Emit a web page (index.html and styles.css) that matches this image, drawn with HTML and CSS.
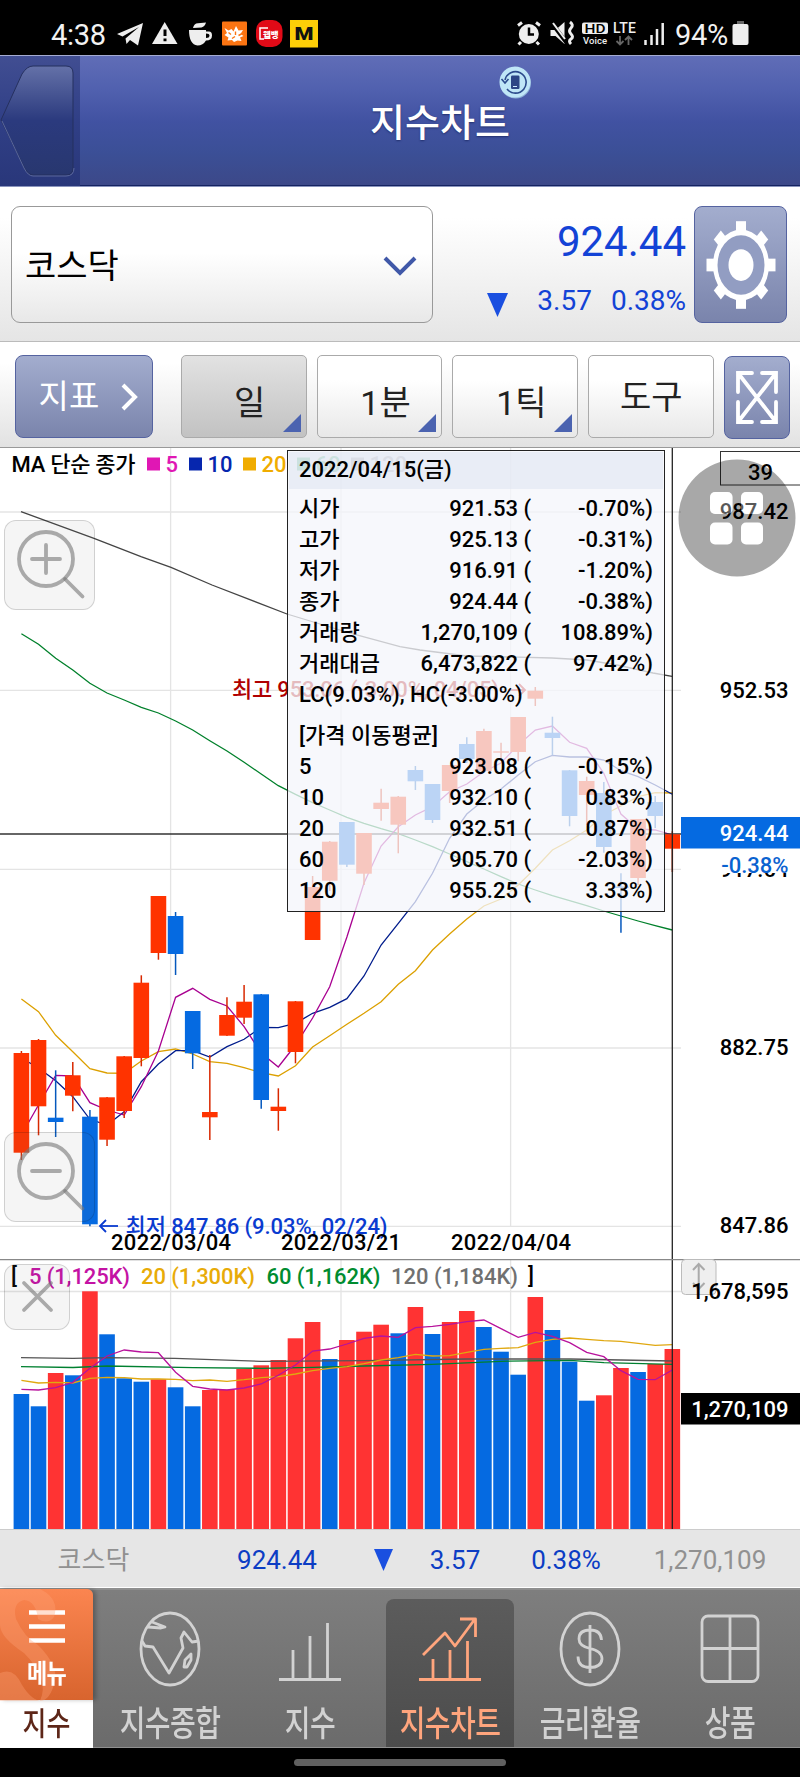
FILE: index.html
```html
<!DOCTYPE html>
<html lang="ko">
  <head>
    <meta charset="UTF-8" />
    <meta name="viewport" content="width=device-width, initial-scale=1.0" />
    <title>지수차트</title>
    <link rel="stylesheet" href="styles.css">
  </head>
  <body>
    <div class="statusbar">
      <div class="status-left">
        <span class="clock">4:38</span>
        <svg class="status-icons" width="204" height="30" viewBox="115 19 204 30">
          <path d="M117 34 143 23 138 45.500 130 40 126.500 44 125.500 38.500 139 27 122.500 36.500Z" fill="#eee" />
          <path d="M164.700 22 177.500 44H152Z" fill="#eee" />
          <path d="M163.500 29.500h3v6.500h-3zM163.500 38.500h3v2.800h-3z" fill="#000" />
          <path d="M189 30h17v1.500h3q3 0 3 4 0 5-6 5-3 5-8.500 5-8.500-1-8.500-15.500zM206 33.500v4.500q3.500 0 3.500-2.500 0-2-3.500-2zM193 28q1-4.500 5-4.700l8-.8q-1 4-4.500 5z" fill="#eee" fill-rule="evenodd" />
          <rect x="222" y="21.500" width="25" height="24" rx="1" fill="#fb7412" />
          <path d="M224.500 28l4 2.500 3-1.500 2 2.500 2.500-5.500 2.500 4.500 4.500-.5-2.500 4 3 2-3.500 1.500 1.500 3.500-4-.5-3.500 1.500-2-2-4.500.5 1-3-4-2.500 2.500-2z" fill="#fff" />
          <path d="M228.500 32.500l2.500 2M235.500 31.500v3.500M238.500 35.500l3-1.500M232 38.500l3-2" stroke="#fb7412" stroke-width="1.400" />
          <rect x="256" y="20" width="26.500" height="27" rx="10" fill="#e10a17" />
          <path d="M268 28h-8v11h4" fill="none" stroke="#fff" stroke-width="1.500" />
          <text x="263" y="38" class="bank-text">웰뱅</text>
          <rect x="290" y="20" width="28" height="27.500" fill="#fdce08" />
          <text x="294.500" y="39.500" class="m-text" textLength="19" lengthAdjust="spacingAndGlyphs">M</text>
        </svg>
      </div>
      <div class="status-right">
        <svg class="status-icons" width="151" height="30" viewBox="516 19 151 30">
          <circle cx="529.800" cy="34" r="10" fill="#eee" />
          <path d="M519 25.500l4-3M537 22.500l4 3M522 42l-2.500 2.500M537.500 42l2.500 2.500" stroke="#eee" stroke-width="3" />
          <path d="M530 27.500v7h5" fill="none" stroke="#000" stroke-width="2.500" />
          <path d="M551.500 30h5l9-8v22l-9-8h-5z" fill="#eee" />
          <path d="M552 22l15 20" stroke="#000" stroke-width="4" />
          <path d="M554 23l12 16" stroke="#eee" stroke-width="2" />
          <path d="M571 22q4 3 1 6t0 6 0 5 0 5" fill="none" stroke="#eee" stroke-width="3" />
          <rect x="583" y="22.500" width="26" height="11.500" rx="2" fill="#eee" />
          <text x="585.500" y="32.500" class="hd" textLength="21" lengthAdjust="spacingAndGlyphs">HD</text>
          <text x="584" y="43.500" class="voice" textLength="24">Voice</text>
          <text x="614" y="32.500" class="lte" textLength="23">LTE</text>
          <path d="M621 36v8M617.500 41l3.500 3.500 3.500-3.500M629.500 45v-8M626 40l3.500-3.500 3.500 3.500" fill="none" stroke="#666" stroke-width="1.800" />
          <path d="M646.500 40v5M652.500 35v10M658 29v16M663.700 23v22" stroke="#eee" stroke-width="2.500" />
        </svg>
        <span class="battery-text">94%</span>
        <svg width="17" height="26" viewBox="0 0 17 26">
          <rect x="5" y="2" width="7" height="4" fill="#666" />
          <rect x=".5" y="5" width="16" height="21" rx="2" fill="#eee" />
        </svg>
      </div>
    </div>

    <div class="header">
      <div class="back">
        <svg width="80" height="130" viewBox="0 1 80 130">
          <defs>
            <linearGradient id="backFill" x1="0" y1="0" x2="0" y2="1">
              <stop offset="0" stop-color="#6471a8" />
              <stop offset=".5" stop-color="#2b3a7e" />
              <stop offset="1" stop-color="#28376f" />
            </linearGradient>
          </defs>
          <path d="M1 65 22 19Q27 11 33 11H66Q73 11 73 18V113Q73 120 66 120H33Q28 120 25 114Z" fill="url(#backFill)" stroke="#25305f" />
          <path d="M2 66 24 113Q28 121 33 121H66Q74 121 74 113" fill="none" stroke="#5a679b" />
        </svg>
      </div>
      <div class="header-title">
        <h1>지수차트</h1>
        <svg class="rotate-badge" width="33" height="33" viewBox="0 0 33 33">
          <circle cx="16.500" cy="17" r="15.500" fill="#8fb2d8" />
          <circle cx="16" cy="16" r="15.500" fill="#bfe6f7" />
          <path d="M6 14A10.700 10.700 0 1 1 8 23" fill="none" stroke="#2b4a8c" stroke-width="1.600" />
          <path d="M2.500 13l3.500 4 3.500-4" fill="none" stroke="#2b4a8c" stroke-width="1.600" />
          <rect x="12" y="9.500" width="8.500" height="13.500" rx="1.200" fill="#2c4686" />
          <path d="M14 20.500h4" stroke="#cfeaff" />
        </svg>
      </div>
    </div>

    <div class="quote">
      <div class="select">
        <span>코스닥</span>
        <svg width="34" height="22" viewBox="0 0 34 22">
          <path d="M2 3 17 18 32 3" fill="none" stroke="#4058a8" stroke-width="4" />
        </svg>
      </div>
      <div class="price">
        <div class="price-now">924.44</div>
        <div class="price-diff">
          <svg width="21" height="24" viewBox="0 0 21 24"><path d="M0 0h21L10.500 24z" fill="#1a4fe0" /></svg>
          <span class="diff">3.57</span>
          <span>0.38%</span>
        </div>
      </div>
      <div class="settings">
        <svg width="70" height="90" viewBox="0 0 70 90">
          <g transform="translate(35 45) scale(1 1.270)" fill="#fff">
            <rect x="-5" y="-34.500" width="10" height="69" />
            <rect x="-34.500" y="-5" width="69" height="10" />
            <rect x="-5" y="-33.500" width="10" height="67" transform="rotate(45)" />
            <rect x="-5" y="-33.500" width="10" height="67" transform="rotate(-45)" />
            <circle r="28" />
            <circle r="23.500" fill="#929dc2" />
            <circle r="12.500" />
          </g>
        </svg>
      </div>
    </div>

    <div class="toolbar">
      <div class="btn btn-blue btn-indicator">
        <span>지표</span>
        <svg width="18" height="28" viewBox="0 0 18 28"><path d="M3 2 15 14 3 26" fill="none" stroke="#fff" stroke-width="4" /></svg>
      </div>
      <div class="btn btn-period selected">일</div>
      <div class="btn btn-period">1분</div>
      <div class="btn btn-period">1틱</div>
      <div class="btn btn-tool">도구</div>
      <div class="btn btn-blue btn-full">
        <svg width="42" height="54" viewBox="0 0 42 54" fill="none" stroke="#fff" stroke-width="3.800" stroke-linecap="round">
          <path d="M2 21V2H16M26 2H40V21M2 31V51H16M26 51H40V31M2 2 40 51M40 2 2 51" />
        </svg>
      </div>
    </div>

    <div class="chart">
      <svg id="price-chart" class="price-chart" width="800" height="811" viewBox="0 448 800 811"></svg>
      <svg id="volume-chart" class="volume-chart" width="800" height="270" viewBox="0 1259 800 270"></svg>

      <div class="tooltip">
        <div class="tooltip-date">2022/04/15(금)</div>
        <div class="tooltip-body">
          <div class="row"><span>시가</span><span>921.53 (</span><span>-0.70%)</span></div>
          <div class="row"><span>고가</span><span>925.13 (</span><span>-0.31%)</span></div>
          <div class="row"><span>저가</span><span>916.91 (</span><span>-1.20%)</span></div>
          <div class="row"><span>종가</span><span>924.44 (</span><span>-0.38%)</span></div>
          <div class="row"><span>거래량</span><span>1,270,109 (</span><span>108.89%)</span></div>
          <div class="row"><span>거래대금</span><span>6,473,822 (</span><span>97.42%)</span></div>
          <div class="line">LC(9.03%), HC(-3.00%)</div>
          <div class="line ma-title">[가격 이동평균]</div>
          <div class="row"><span>5</span><span>923.08 (</span><span>-0.15%)</span></div>
          <div class="row"><span>10</span><span>932.10 (</span><span>0.83%)</span></div>
          <div class="row"><span>20</span><span>932.51 (</span><span>0.87%)</span></div>
          <div class="row"><span>60</span><span>905.70 (</span><span>-2.03%)</span></div>
          <div class="row"><span>120</span><span>955.25 (</span><span>3.33%)</span></div>
        </div>
      </div>

      <div class="chart-btn zoom-in">
        <svg width="89" height="88" viewBox="0 0 89 88">
          <circle cx="41" cy="38" r="27" /><path d="M41 24v28M27 38h28M60 58l17.500 17.500" />
        </svg>
      </div>
      <div class="chart-btn zoom-out">
        <svg width="89" height="88" viewBox="0 0 89 88">
          <circle cx="41" cy="38" r="27" /><path d="M27 38h28M60 58l17.500 17.500" />
        </svg>
      </div>
      <div class="chart-btn close">
        <svg width="64" height="64" viewBox="0 0 64 64"><path d="M19 18l27 27M46 18l-27 27" /></svg>
      </div>
      <svg class="float-menu" width="118" height="118" viewBox="0 0 118 118">
        <defs>
          <mask id="holes">
            <circle cx="59" cy="59" r="58.500" fill="#fff" />
            <rect x="32" y="33" width="22.500" height="22" rx="5" />
            <rect x="63" y="33" width="22" height="22" rx="5" />
            <rect x="32" y="63.500" width="22.500" height="22" rx="5" />
            <rect x="63" y="63.500" width="22" height="22" rx="5" />
          </mask>
        </defs>
        <rect width="118" height="118" fill="#000" fill-opacity=".34" mask="url(#holes)" />
        <g fill="#fff" fill-opacity=".35">
          <rect x="32" y="33" width="22.500" height="22" rx="5" />
          <rect x="63" y="33" width="22" height="22" rx="5" />
        </g>
      </svg>
    </div>

    <div class="summary">
      <span class="muted">코스닥</span>
      <span>924.44</span>
      <svg width="19" height="22" viewBox="0 0 19 22"><path d="M0 0h19L9.500 22z" fill="#1a4fe0" /></svg>
      <span>3.57</span>
      <span>0.38%</span>
      <span class="muted">1,270,109</span>
    </div>

    <div class="nav">
      <div class="menu">
        <div class="menu-top">
          <svg class="menu-swirl" width="93" height="112" viewBox="0 0 93 112">
            <path d="M0 0H40Q60 10 54 28 48 36 38 30 36 12 24 11 12 14 16 30 24 48 38 56 58 76 55 92 50 112 40 112 50 90 24 64 0 48 0 36ZM0 84Q14 78 22 96 32 112 42 112H0Z" fill="#ffa378" fill-opacity=".35" />
          </svg>
          <svg width="36" height="34" viewBox="0 0 36 34"><path d="M0 2.500h36M0 16.500h36M0 30.500h36" stroke="#fff" stroke-width="4.500" /></svg>
          <span>메뉴</span>
        </div>
        <div class="menu-bottom"><span>지수</span></div>
      </div>
      <div class="tab">
        <svg width="64" height="78" viewBox="0 0 64 78">
          <ellipse cx="32" cy="39" rx="29" ry="36" />
          <path d="M4 31 7 36 15 37 31 63 45 38 43 28 46 22 54 32 61 31M14 12 27 17 23 18 10 17M46 57 47 50 53 44 53 50 49 57Z" />
        </svg>
        <span>지수종합</span>
      </div>
      <div class="tab">
        <svg width="64" height="78" viewBox="0 0 64 78">
          <path d="M1 69.500H63M15 69V40M32 69V26M49.500 69V13" />
        </svg>
        <span>지수</span>
      </div>
      <div class="tab active">
        <svg width="64" height="78" viewBox="0 0 64 78">
          <path d="M1 69.500H63M15 69V49M32 69V40M49.500 69V31M5 45 27 23 37 36 57 9M42 9H57.500V27" />
        </svg>
        <span>지수차트</span>
      </div>
      <div class="tab">
        <svg width="64" height="78" viewBox="0 0 64 78">
          <ellipse cx="32" cy="39" rx="29" ry="36" />
          <path d="M32 15V63M43.500 30Q43 20 32 20 21 20 21 29 21 36 32 38.500 44 41 44 49 43 57.500 32 57.500 20 57.500 20 46.500" />
        </svg>
        <span>금리환율</span>
      </div>
      <div class="tab">
        <svg width="64" height="78" viewBox="0 0 64 78">
          <rect x="4" y="6" width="56" height="65.500" rx="6" /><path d="M32 6V71.500M4 38.500H60" />
        </svg>
        <span>상품</span>
      </div>
    </div>

    <div class="gesture"><div class="pill"></div></div>

    <script src="chart.js"></script>
  </body>
</html>
```

FILE: styles.css
```css
* {
  margin: 0;
  padding: 0;
  box-sizing: border-box;
}
body {
  width: 800px;
  height: 1777px;
  overflow: hidden;
  background: #fff;
  font-family: Roboto, "Noto Sans CJK KR", sans-serif;
}
svg {
  display: block;
  flex: none;
}

/* status bar */
.statusbar {
  display: flex;
  justify-content: space-between;
  height: 55px;
  padding: 19px 51px 0 51px;
  background: #000;
  color: #f2f2f2;
}
.status-left,
.status-right {
  display: flex;
}
.clock {
  width: 64px;
  font-size: 29px;
  line-height: 32px;
  letter-spacing: -0.3px;
}
.battery-text {
  width: 58px;
  padding-left: 9px;
  margin-right: 8px;
  font-size: 29px;
  line-height: 32px;
  letter-spacing: -0.3px;
}
.bank-text {
  font-size: 8.5px;
  font-weight: 900;
  fill: #fff;
}
.m-text {
  font-size: 18px;
  font-weight: 900;
  fill: #111;
}
.hd {
  font-size: 12px;
  font-weight: 500;
}
.voice {
  font-size: 9.5px;
  font-weight: 500;
  fill: #eee;
}
.lte {
  font-size: 14px;
  font-weight: 500;
  fill: #eee;
}

/* header */
.header {
  display: flex;
  height: 132px;
  border-top: 1px solid #a5acd2;
  border-bottom: 1px solid #8a94bd;
  background: linear-gradient(#606db7, #5161af 25%, #4152a2 50%, #3b4f96 75%, #3c4888);
  box-shadow: inset 0 -1px 0 #142360;
}
.back {
  width: 80px;
  background: linear-gradient(#414e92, #303f86 50%, #29377a);
}
.header-title {
  position: relative;
  display: flex;
  flex: 1;
  justify-content: center;
  align-items: center;
}
h1 {
  padding-top: 4px;
  color: #fff;
  font-size: 38px;
  font-weight: 500;
  line-height: 50px;
  text-shadow: 0 1px 2px #22306e;
}
.rotate-badge {
  position: absolute;
  left: 419px;
  top: 10px;
}

/* quote row */
.quote {
  display: flex;
  height: 155px;
  padding: 19px 13px 18px 11px;
  border-bottom: 1px solid #bbb;
  background: linear-gradient(#fff 20%, #e5e5e5);
}
.select {
  display: flex;
  justify-content: space-between;
  align-items: center;
  width: 422px;
  padding: 2px 15px 0 13px;
  border: 1px solid #999;
  border-radius: 9px;
  background: linear-gradient(#fff 40%, #e8e8e8);
  font-size: 34px;
  line-height: 50px;
}
.price {
  width: 261px;
  padding-right: 8px;
  color: #1343d6;
  text-align: right;
}
.price-now {
  padding-top: 11px;
  font-size: 42px;
  line-height: 50px;
}
.price-diff {
  display: flex;
  justify-content: flex-end;
  margin-top: 17px;
  font-size: 28px;
  line-height: 34px;
}
.price-diff svg {
  margin: 9px 29px 0 0;
}
.diff {
  margin-right: 19px;
}
.settings {
  display: flex;
  justify-content: center;
  align-items: center;
  width: 93px;
  border: 1px solid #5563a0;
  border-radius: 8px;
  background: linear-gradient(#a3adce, #7a84ac);
}

/* toolbar */
.toolbar {
  display: flex;
  height: 106px;
  padding: 13px 10px 10px 15px;
  border-bottom: 1px solid #999;
  background: linear-gradient(#fff 20%, #e2e2e2);
}
.btn {
  position: relative;
  display: flex;
  justify-content: center;
  align-items: center;
  width: 126px;
  height: 83px;
  margin-right: 10px;
  border: 1px solid #aaa;
  border-radius: 5px;
  background: linear-gradient(#fff 30%, #e8e8e8);
  color: #222;
  font-size: 34px;
  line-height: 50px;
}
.btn-blue {
  border-color: #5563a0;
  border-radius: 8px;
  background: linear-gradient(#a3adce, #7a84ac);
  color: #fff;
}
.btn-indicator {
  width: 138px;
  margin-right: 28px;
  gap: 21px;
  padding-left: 9px;
}
.btn-indicator span {
  font-size: 33px;
}
.btn-period {
  padding: 12px 0 0 12px;
}
.btn-period::after {
  content: "";
  position: absolute;
  right: 5px;
  bottom: 5px;
  border-bottom: 18px solid #4b63b0;
  border-left: 18px solid transparent;
}
.selected {
  background: linear-gradient(#e2e2e2, #c2c2c2);
}
.btn-full {
  width: 66px;
  margin: 1px 0 0;
}

/* chart */
.chart {
  position: relative;
  height: 1081px;
  overflow: hidden;
}
.chart text {
  font-size: 22px;
  font-weight: 500;
}
.end {
  text-anchor: end;
}
.mid {
  text-anchor: middle;
}
.tooltip {
  position: absolute;
  left: 287px;
  top: 2px;
  width: 378px;
  height: 462px;
  padding: 1px;
  border: 1px solid #222;
  background: rgba(244, 246, 251, 0.76);
  font-size: 22px;
  font-weight: 500;
  line-height: 31px;
}
.tooltip-date {
  height: 37px;
  padding-left: 10px;
  background: rgba(220, 226, 240, 0.5);
  line-height: 36px;
}
.tooltip-body {
  padding: 4px 10px 0 10px;
}
.row {
  display: grid;
  grid-template-columns: 100px 1fr 122px;
  height: 31px;
  white-space: nowrap;
}
.row span + span {
  text-align: right;
}
.ma-title {
  margin-top: 10px;
}
.chart-btn {
  position: absolute;
  left: 4px;
  border: 1px solid rgba(0, 0, 0, 0.15);
  border-radius: 12px;
  background: rgba(120, 120, 120, 0.07);
}
.chart-btn svg {
  fill: none;
  stroke: #777;
  stroke-opacity: 0.6;
  stroke-width: 3.8;
  stroke-linecap: round;
}
.zoom-in {
  top: 72px;
  width: 91px;
  height: 90px;
}
.zoom-out {
  top: 684px;
  width: 91px;
  height: 90px;
}
.close {
  top: 816px;
  width: 66px;
  height: 66px;
}
.float-menu {
  position: absolute;
  left: 678px;
  top: 11px;
}

/* summary */
.summary {
  display: grid;
  grid-template-columns: 187px 180px 32px 112px 110px 178px;
  justify-items: center;
  align-items: center;
  height: 59px;
  padding-top: 3px;
  border-top: 1px solid #ccc;
  border-bottom: 1px solid #fff;
  background: #e6e6e6;
  color: #0c3dc4;
  font-size: 26px;
  line-height: 40px;
}
.muted {
  color: #919191;
}

/* bottom tabs */
.nav {
  display: flex;
  height: 160px;
  border-top: 2px solid #8f8f8f;
  border-bottom: 1px solid #909090;
  background: linear-gradient(#7e7e7e, #6b6b6b);
}
.menu {
  width: 93px;
  height: 159px;
  margin: -1px 7px 0 0;
}
.menu-top {
  position: relative;
  display: flex;
  flex-direction: column;
  align-items: center;
  height: 111px;
  padding-top: 21px;
  border-radius: 0 6px 0 0;
  background: linear-gradient(#fb8550, #d8642e);
  box-shadow: 3px 0 4px rgba(0, 0, 0, 0.25);
  color: #fff;
  font-size: 22px;
  font-weight: 700;
  line-height: 30px;
}
.menu-top span {
  margin-top: 16px;
  letter-spacing: -0.8px;
  transform: scaleY(1.2);
}
.menu-swirl {
  position: absolute;
  left: 0;
  top: 0;
}
.menu-bottom {
  height: 48px;
  background: #fff;
  color: #5d2618;
  font-size: 26px;
  font-weight: 500;
  line-height: 48px;
  text-align: center;
}
.menu-bottom span {
  display: block;
  transform: scaleY(1.24);
}
.tab {
  display: flex;
  flex-direction: column;
  align-items: center;
  width: 128px;
  height: 147px;
  margin: 9px 6px 0;
  padding-top: 11px;
  color: #d2d2d2;
  font-size: 28px;
  font-weight: 500;
  line-height: 40px;
}
.tab svg {
  fill: none;
  stroke: currentColor;
  stroke-width: 2.8;
  stroke-linejoin: round;
}
.tab span {
  margin-top: 17px;
  letter-spacing: -0.6px;
  white-space: nowrap;
  transform: scaleY(1.24);
}
.active {
  height: 148px;
  border-radius: 8px 8px 0 0;
  background: linear-gradient(#5c5c5c, #4c4c4c);
}
.tab.active {
  color: #ffa57d;
}

.gesture {
  display: flex;
  justify-content: center;
  height: 29px;
  padding-top: 11px;
  background: #000;
}
.pill {
  width: 212px;
  height: 7px;
  border-radius: 4px;
  background: #606060;
}
```

FILE: chart.js
```js
const x0 = 21.4;
const step = 17.13;
const barW = 15.6;
const RED = "#ff3300";
const BLUE = "#056ae1";
const px = (i) => x0 + i * step;

// up/down, body top, body bottom, high, low
const candles = [
  ["r", 1053, 1152.7, 1051, 1160], ["r", 1040, 1106.3, 1039, 1135.3], ["b", 1117.7, 1122, 1070.3, 1137],
  ["r", 1075.3, 1095.7, 1062, 1111.3], ["b", 1116.7, 1224.3, 1110, 1226.3], ["r", 1097.3, 1139.7, 1097, 1146],
  ["r", 1056.3, 1111, 1056, 1118], ["r", 982.7, 1058, 975.3, 1066.3], ["r", 896, 953, 896, 959.7],
  ["b", 916, 954, 912, 975], ["b", 1011, 1053.3, 1011, 1069], ["r", 1112, 1117.3, 1055, 1140],
  ["r", 1015, 1035.7, 997.3, 1036], ["r", 1001.7, 1017.7, 985, 1024], ["b", 994.3, 1100, 994, 1108.7],
  ["r", 1106.7, 1111, 1088.3, 1130.7], ["r", 1001.3, 1052, 1001, 1063.3], ["r", 887, 940, 876, 940],
  ["r", 841.7, 880.7, 841, 891], ["b", 822, 864.7, 822, 867], ["r", 833, 873.7, 833, 885],
  ["r", 802.7, 809, 788.7, 820.7], ["r", 796.7, 824.7, 796, 853.3], ["b", 770, 781.3, 766, 790],
  ["b", 784, 820, 784, 823], ["r", 765, 791, 765, 803], ["b", 744, 759, 737.3, 763],
  ["r", 731, 771, 728.7, 771], ["r", 751.3, 752.7, 742.7, 759], ["r", 717, 752, 717, 761.3],
  ["r", 690.7, 698.7, 687, 706], ["b", 732.7, 738, 716.7, 755.3], ["b", 770.3, 816, 770, 826.3],
  ["r", 781, 795, 776.7, 825], ["b", 793, 847, 782, 852.7], ["b", 886.5, 888, 873.3, 932.7],
  ["r", 819, 878, 819, 885], ["b", 802, 816, 796, 828], ["r", 834.3, 848.7, 831.3, 872],
];

const ma5 = [1135, 1105, 1075.3, 1076, 1102.7, 1110, 1115, 1086.7, 1051, 997.3, 988.3, 999.3, 1006, 1026.7, 1053, 1067, 1045, 1018, 986.7, 937, 883, 846, 826.7, 815, 806.7, 791.7, 784, 771.7, 763, 745, 730, 726, 742.3, 748.3, 773.3, 814, 829, 830, 835];
const ma10 = [1058, 1068, 1080.7, 1096.7, 1119.3, 1125, 1111.7, 1081.7, 1064, 1050.7, 1050.7, 1057, 1046.7, 1039.3, 1027.3, 1027.7, 1023.3, 1013.3, 1007.3, 998.7, 976, 945, 923.3, 901.7, 873.3, 838.3, 814, 800, 789, 775, 761.7, 755.3, 757, 757, 760, 770.7, 776.7, 785, 794.3];
const ma20 = [999, 1011.7, 1035.3, 1051.7, 1068.7, 1073, 1073.3, 1061, 1051.7, 1049, 1054, 1061.7, 1063.3, 1067.7, 1072.7, 1076, 1065.7, 1047, 1035.7, 1024.3, 1013.3, 1001.7, 984.3, 970.7, 950, 934, 919, 906, 899, 885, 868.3, 850, 840.7, 830, 815, 806, 796.7, 792.7, 793];
const ma60 = [633.7, 644.3, 658.3, 670, 683.3, 693, 700, 707.3, 713, 721, 730, 740.7, 751, 762.3, 774, 785.7, 794.3, 802.7, 810, 817.3, 823.3, 828.7, 833.7, 840, 846.7, 854, 861.7, 869, 876.7, 884, 890, 895.7, 900.7, 905.7, 911, 916, 921, 925.7, 930];
const ma120 = "21,511.700 94,538.300 141,556.700 171,567.300 212,585 287,614 353,634 400,646.700 420,650 467,656 552,658 587,660 617,665 653,673 672,676.300";

// up/down, bar top
const volumes = [
  ["b", 1394], ["b", 1406.3], ["r", 1373], ["b", 1375.3], ["r", 1291.3], ["b", 1334.3], ["b", 1378.3], ["b", 1381.7],
  ["r", 1379.3], ["b", 1387.3], ["b", 1406.3], ["r", 1390], ["r", 1389.7], ["r", 1369], ["r", 1365.3], ["r", 1360],
  ["r", 1338.3], ["r", 1322], ["b", 1359], ["r", 1340], ["r", 1331.7], ["r", 1324.7], ["b", 1333.3], ["r", 1307],
  ["b", 1334], ["r", 1322], ["r", 1311], ["b", 1327], ["b", 1351.7], ["b", 1374.7], ["r", 1297], ["b", 1330],
  ["b", 1361.7], ["b", 1400.7], ["r", 1395.3], ["r", 1368], ["b", 1372], ["r", 1364], ["r", 1349],
];
const vol5 = [1389.3, 1390, 1387.7, 1382.3, 1368.3, 1356, 1350, 1352, 1352.7, 1372.3, 1386.3, 1389, 1390, 1388, 1384, 1375.3, 1365, 1351, 1349, 1344, 1338.3, 1336, 1337.3, 1327.7, 1326.3, 1324.3, 1321.7, 1320, 1328.7, 1337.3, 1332.3, 1336.3, 1342.7, 1352.3, 1356.7, 1370.7, 1379.3, 1379.7, 1370];
const vol20 = [1380.3, 1383, 1382.3, 1383, 1378.3, 1377.3, 1377.7, 1379, 1379, 1379.3, 1380.7, 1380, 1381.3, 1379.7, 1377.7, 1376.7, 1374, 1370.7, 1368.3, 1366.7, 1363.7, 1360, 1357.7, 1354.3, 1356, 1355.7, 1352.3, 1349.3, 1348.3, 1347.7, 1342.3, 1339.3, 1338, 1339.3, 1340.7, 1341.3, 1343.3, 1345.3, 1344.7];
const vol60 = "21,1366.700 73,1367.500 107,1366 193,1367.700 261,1368.300 313,1367.300 364,1366 432,1364.300 501,1361.300 570,1360.300 604,1362.700 672,1364.300";
const vol120 = "21,1357.700 73,1358.300 107,1357.700 175,1358.300 261,1361.300 364,1360.700 467,1359 570,1359 672,1361";

const line = (pts, color, w = 1.3) =>
  `<polyline points="${pts}" fill="none" stroke="${color}" stroke-width="${w}" />`;
const series = (arr, color) => line(arr.map((y, i) => `${px(i).toFixed(1)},${y}`).join(" "), color);
const text = (x, y, s, fill = "#000", cls = "", len = 0) =>
  `<text x="${x}" y="${y}" fill="${fill}" class="${cls}" ${len ? `textLength="${len}"` : ""}>${s}</text>`;

function drawPrice() {
  let s = "";
  [512, 690.3, 869.3, 1048, 1226.3].forEach((y) => {
    s += line(`0,${y} 681,${y}`, "#e4e4e4");
  });
  [170.6, 341, 510.6].forEach((x) => {
    s += line(`${x},448 ${x},1226`, "#e4e4e4");
  });

  s += text(11.5, 472, "MA 단순 종가", "#000", "", 124);
  [[147, "#e017b4", 5], [189, "#0626ae", 10], [243, "#f0ac00", 20], [297, "#00a040", 60], [351, "#888", 120]].forEach(([x, c, n]) => {
    s += `<rect x="${x}" y="457.500" width="13" height="13" fill="${c}" />`;
    s += text(x + 18.5, 472, n, c);
  });

  s += line(ma120, "#444");
  s += series(ma60, "#00802b");
  s += series(ma20, "#dca000");
  s += series(ma10, "#001c8c");
  s += series(ma5, "#a80090");
  s += line("0,834 681,834", "#333");
  candles.forEach(([d, top, bottom, high, low], i) => {
    const c = d === "r" ? RED : BLUE;
    s += line(`${px(i)},${high} ${px(i)},${low}`, d === "r" ? "#d82800" : "#0558bd", 1.5);
    s += `<rect x="${px(i) - barW / 2}" y="${top}" width="${barW}" height="${bottom - top}" fill="${c}" />`;
  });
  s += line("672.300,448 672.300,1259", "#222");

  s += text(232, 697, "최고 953.06 (-3.00%, 04/05)", "#b00000", "", 267);
  s += line("508,690 525,690", "#c00000", 1.8) + line("519,684 525,690 519,696", "#c00000", 1.8);
  s += text(125.5, 1234, "최저 847.86 (9.03%, 02/24)", "#0a3bd0", "", 262);
  s += line("118,1226 100,1226", "#0a3bd0", 1.8) + line("106,1220 100,1226 106,1232", "#0a3bd0", 1.8);
  s += text(171, 1249.5, "2022/03/04", "#000", "mid", 120);
  s += text(341, 1249.5, "2022/03/21", "#000", "mid", 120);
  s += text(511, 1249.5, "2022/04/04", "#000", "mid", 120);

  // right axis
  s += `<rect x="720.500" y="451.500" width="90" height="33.500" fill="none" stroke="#333" />`;
  s += text(760.5, 479.5, "39", "#000", "mid");
  s += text(788.5, 519.3, "987.42", "#000", "end");
  s += text(788.5, 697.7, "952.53", "#000", "end");
  s += text(788.5, 876.5, "917.64", "#000", "end");
  s += text(788.5, 1055.3, "882.75", "#000", "end");
  s += text(788.5, 1233.3, "847.86", "#000", "end");
  s += `<rect x="700" y="849" width="100" height="24" fill="#fff" />`;
  s += `<rect x="681" y="817" width="119" height="31.500" fill="${BLUE}" />`;
  s += text(788.5, 841, "924.44", "#fff", "end");
  s += text(788.5, 873, "-0.38%", "#0a62d0", "end");
  document.getElementById("price-chart").innerHTML = s;
}

function drawVolume() {
  let s = line("0,1291.500 681,1291.500", "#e4e4e4");
  [170.6, 341, 510.6].forEach((x) => {
    s += line(`${x},1259 ${x},1529`, "#e4e4e4");
  });
  volumes.forEach(([d, top], i) => {
    s += `<rect x="${px(i) - barW / 2}" y="${top}" width="${barW}" height="${1529 - top}" fill="${d === "r" ? "#ff3333" : BLUE}" />`;
  });
  s += line(vol120, "#555") + line(vol60, "#008030");
  s += series(vol20, "#e0a810");
  s += series(vol5, "#b8129c");
  s += line("672.300,1259 672.300,1529", "#222");
  s += line("0,1259.500 800,1259.500", "#888", 1.5);

  s += text(11, 1283, "[");
  s += text(29, 1284, "5 (1,125K)", "#c412a4", "", 101);
  s += text(141, 1284, "20 (1,300K)", "#e8ab08", "", 114);
  s += text(266.5, 1284, "60 (1,162K)", "#008c30", "", 114);
  s += text(391, 1284, "120 (1,184K)", "#707070", "", 127);
  s += text(528, 1283, "]");

  s += `<rect x="681.500" y="1259.500" width="34.500" height="35" rx="4" fill="#efefef" stroke="#bbb" />`;
  s += line("698.700,1264 698.700,1288", "#aaa", 2) + line("693,1270 698.700,1264 704.500,1270", "#aaa", 2) + line("693,1283 698.700,1289 704.500,1283", "#aaa", 2);
  s += text(788.5, 1299, "1,678,595", "#000", "end");
  s += `<rect x="681" y="1393" width="119" height="31.500" fill="#000" />`;
  s += text(788.5, 1417, "1,270,109", "#fff", "end");
  document.getElementById("volume-chart").innerHTML = s;
}

drawPrice();
drawVolume();
```
